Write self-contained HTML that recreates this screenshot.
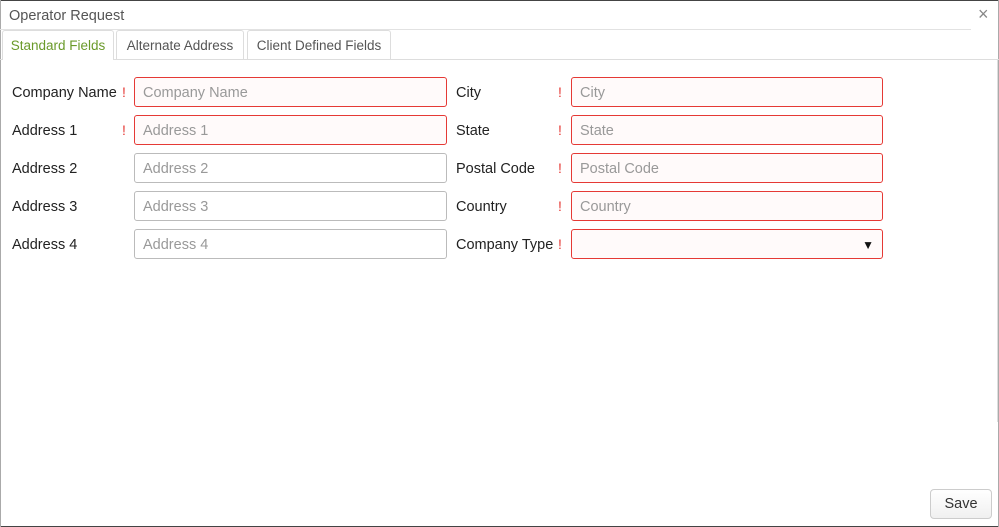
<!DOCTYPE html><html><head><style>
body{margin:0;width:999px;height:527px;overflow:hidden;font-family:"Liberation Sans",sans-serif;background:#fff;position:relative}
.a{position:absolute}
.lbl{font-size:14.5px;color:#222;line-height:16px}
.ex{color:#e53935;font-size:14px;line-height:16px}
.in{position:absolute;border:1px solid #bbb;border-radius:3px;font-size:14.5px;color:#999;line-height:30px;padding-left:8px;box-sizing:border-box;height:30px;width:313px}
.r{border-color:#e53935;background:#fffafa}
.tab{position:absolute;top:30px;height:29px;border:1px solid #ddd;border-bottom:none;border-radius:3px 3px 0 0;font-size:13.5px;color:#555;line-height:30px;text-align:center;box-sizing:border-box}
</style></head><body>
<div class="a" style="left:0;top:0;width:999px;height:1px;background:#444"></div>
<div class="a" style="left:0;top:526px;width:999px;height:1px;background:#444"></div>
<div class="a" style="left:0;top:0;width:1px;height:527px;background:#aaa"></div>
<div class="a" style="left:998px;top:0;width:1px;height:527px;background:#aaa"></div>
<div class="a" style="left:9px;top:8px;font-size:14.5px;color:#555">Operator Request</div>
<div class="a" style="left:978px;top:4px;font-size:18px;color:#888">×</div>
<div class="a" style="left:0;top:29px;width:971px;height:1px;background:#e2e2e2"></div>
<div class="a" style="left:0;top:59px;width:999px;height:1px;background:#ddd"></div>
<div class="a" style="left:997px;top:60px;width:1px;height:362px;background:#ddd"></div>
<div class="tab" style="left:2px;width:112px;color:#6a9a2a;background:#fff;height:30px">Standard Fields</div>
<div class="tab" style="left:116px;width:128px">Alternate Address</div>
<div class="tab" style="left:247px;width:144px">Client Defined Fields</div>

<div class="a lbl" style="left:12px;top:85px">Company Name</div><div class="a ex" style="left:122px;top:84px">!</div>
<div class="in r" style="left:134px;top:77px">Company Name</div>
<div class="a lbl" style="left:12px;top:123px">Address 1</div><div class="a ex" style="left:122px;top:122px">!</div>
<div class="in r" style="left:134px;top:115px">Address 1</div>
<div class="a lbl" style="left:12px;top:161px">Address 2</div>
<div class="in" style="left:134px;top:153px">Address 2</div>
<div class="a lbl" style="left:12px;top:199px">Address 3</div>
<div class="in" style="left:134px;top:191px">Address 3</div>
<div class="a lbl" style="left:12px;top:237px">Address 4</div>
<div class="in" style="left:134px;top:229px">Address 4</div>

<div class="a lbl" style="left:456px;top:85px">City</div><div class="a ex" style="left:558px;top:84px">!</div>
<div class="in r" style="left:571px;top:77px;width:312px">City</div>
<div class="a lbl" style="left:456px;top:123px">State</div><div class="a ex" style="left:558px;top:122px">!</div>
<div class="in r" style="left:571px;top:115px;width:312px">State</div>
<div class="a lbl" style="left:456px;top:161px">Postal Code</div><div class="a ex" style="left:558px;top:160px">!</div>
<div class="in r" style="left:571px;top:153px;width:312px">Postal Code</div>
<div class="a lbl" style="left:456px;top:199px">Country</div><div class="a ex" style="left:558px;top:198px">!</div>
<div class="in r" style="left:571px;top:191px;width:312px">Country</div>
<div class="a lbl" style="left:456px;top:237px">Company Type</div><div class="a ex" style="left:558px;top:236px">!</div>
<div class="in r" style="left:571px;top:229px;width:312px"><span style="position:absolute;right:8px;top:0;color:#111;font-size:12px">▼</span></div>

<div class="a" style="left:930px;top:489px;width:62px;height:30px;border:1px solid #ccc;border-radius:4px;box-sizing:border-box;background:linear-gradient(#fff,#f0f0f0);font-size:14.5px;color:#333;text-align:center;line-height:29px">Save</div>
</body></html>
